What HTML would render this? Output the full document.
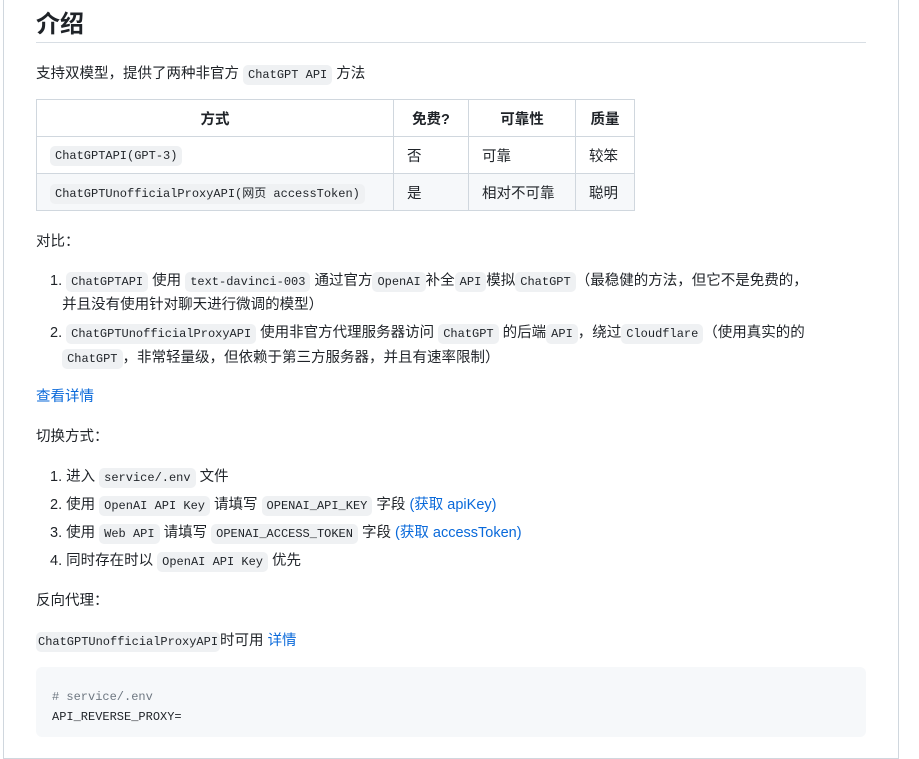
<!DOCTYPE html>
<html><head><meta charset="utf-8"><style>
body{margin:0;background:#fff;font-family:"Liberation Sans","Noto Sans CJK SC",sans-serif;color:#1f2328;font-size:14.5px;}
.frame{position:absolute;left:3px;top:-2px;width:894px;height:760px;border:1px solid #d0d7de;border-top:none;}
.c{position:absolute;left:36px;width:830px;}
code{font-family:"Liberation Mono","Noto Sans CJK SC",monospace;font-size:12px;background:#eff1f3;border-radius:5px;padding:3px 5px;}
h1{position:absolute;left:36px;top:4px;margin:0;font-size:24px;font-weight:bold;width:830px;height:38px;border-bottom:1px solid #d8dee4;}
a{color:#0969da;text-decoration:none}
table{position:absolute;left:36px;top:99px;border-collapse:collapse;}
td,th{border:1px solid #d0d7de;height:36px;padding:0 13px;text-align:left;font-size:14.5px}
th{text-align:center;font-weight:bold}
tr.g td{background:#f6f8fa}
.l{position:absolute;left:50px;}
.n{position:absolute;left:-0px;}
pre{position:absolute;left:36px;top:667px;width:798px;height:70px;margin:0;background:#f6f8fa;border-radius:6px;padding:0 16px;font-family:"Liberation Mono",monospace;font-size:12px;line-height:20px;}
</style></head><body>
<div class="frame"></div>
<h1>介绍</h1>
<div class="c" style="top:62px">支持双模型，提供了两种非官方 <code>ChatGPT API</code> 方法</div>
<table>
<tr><th style="width:330px">方式</th><th style="width:48px">免费?</th><th style="width:80px">可靠性</th><th style="width:32px">质量</th></tr>
<tr><td><code>ChatGPTAPI(GPT-3)</code></td><td>否</td><td>可靠</td><td>较笨</td></tr>
<tr class="g"><td><code>ChatGPTUnofficialProxyAPI(网页 accessToken)</code></td><td>是</td><td>相对不可靠</td><td>聪明</td></tr>
</table>
<div class="c" style="top:230px">对比：</div>
<div class="c" style="top:270px;left:50px;width:816px;line-height:23px">1. <code>ChatGPTAPI</code> 使用 <code>text-davinci-003</code> 通过官方<code>OpenAI</code>补全<code>API</code>模拟<code>ChatGPT</code>（最稳健的方法，但它不是免费的，<br>&nbsp;&nbsp;&nbsp;并且没有使用针对聊天进行微调的模型）</div>
<div class="c" style="top:321px;left:50px;width:816px;line-height:24px">2. <code>ChatGPTUnofficialProxyAPI</code> 使用非官方代理服务器访问 <code>ChatGPT</code> 的后端<code>API</code>，绕过<code>Cloudflare</code>（使用真实的的<br>&nbsp;&nbsp;&nbsp;<code>ChatGPT</code>，非常轻量级，但依赖于第三方服务器，并且有速率限制）</div>
<div class="c" style="top:385px"><a>查看详情</a></div>
<div class="c" style="top:425px">切换方式：</div>
<div class="c" style="top:465px;left:50px">1. 进入 <code>service/.env</code> 文件</div>
<div class="c" style="top:493px;left:50px">2. 使用 <code>OpenAI API Key</code> 请填写 <code>OPENAI_API_KEY</code> 字段 <a>(获取 apiKey)</a></div>
<div class="c" style="top:521px;left:50px">3. 使用 <code>Web API</code> 请填写 <code>OPENAI_ACCESS_TOKEN</code> 字段 <a>(获取 accessToken)</a></div>
<div class="c" style="top:549px;left:50px">4. 同时存在时以 <code>OpenAI API Key</code> 优先</div>
<div class="c" style="top:589px">反向代理：</div>
<div class="c" style="top:629px"><code style="padding:3px 2px">ChatGPTUnofficialProxyAPI</code>时可用 <a>详情</a></div>
<pre><br><span style="color:#6e7781"># service/.env</span>
API_REVERSE_PROXY=</pre>
</body></html>
